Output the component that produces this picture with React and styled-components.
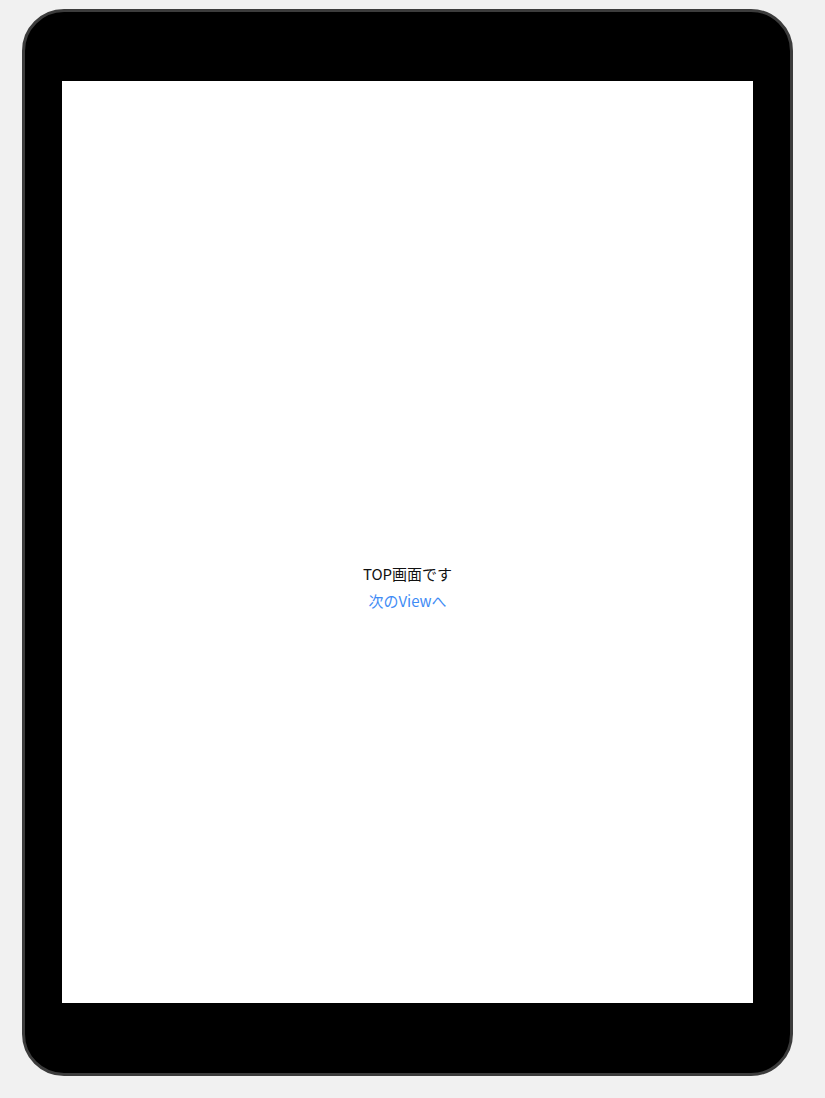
import React from "react";
import styled, { createGlobalStyle } from "styled-components";

const Global = createGlobalStyle`
  html, body {
    margin: 0;
    padding: 0;
    background: #f1f1f1;
  }
  body {
    font-family: "Noto Sans CJK JP", "Noto Sans", sans-serif;
  }
`;

const Page = styled.div`
  width: 825px;
  height: 1098px;
  box-sizing: border-box;
  padding: 9px 0 0 22px;
`;

const Device = styled.div`
  width: 771px;
  height: 1067px;
  box-sizing: border-box;
  background: #000;
  border: 3px solid #3c3c3c;
  border-radius: 42px;
  padding: 69px 36px 69px 37px;
`;

const Screen = styled.div`
  width: 691px;
  height: 922px;
  background: #fff;
  display: flex;
  flex-direction: column;
  align-items: center;
  padding-top: 483px;
  box-sizing: border-box;
`;

const Label = styled.div`
  font-size: 15px;
  line-height: 20px;
  color: ${(p) => (p.$link ? "#3f8cf5" : "#111")};
  margin-top: ${(p) => (p.$link ? "7px" : "0")};
  cursor: ${(p) => (p.$link ? "pointer" : "default")};
`;

export default function App() {
  return (
    <>
      <Global />
      <Page>
        <Device>
          <Screen>
            <Label>TOP画面です</Label>
            <Label $link>次のViewへ</Label>
          </Screen>
        </Device>
      </Page>
    </>
  );
}
